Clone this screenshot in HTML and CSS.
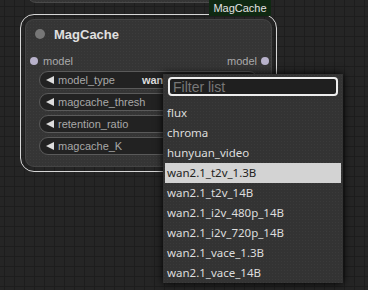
FILE: index.html
```html
<!DOCTYPE html>
<html lang="en">
<head>
    <meta charset="UTF-8">
    <meta name="viewport" content="width=device-width, initial-scale=1.0">
    <title>MagCache</title>
    <link rel="stylesheet" href="styles.css">
</head>
<body>
    <div class="canvas">
        <!-- node above, only its bottom edge is visible -->
        <div class="node upper-node"></div>

        <div class="node selected magcache">
            <div class="node-title">
                <span class="title-dot"></span>
                <span class="title-text">MagCache</span>
            </div>
            <div class="node-body">
                <div class="slot-row">
                    <span class="slot-dot"></span>
                    <span class="slot-name">model</span>
                    <span class="slot-name out">model</span>
                    <span class="slot-dot"></span>
                </div>
                <div class="widget">
                    <span class="arrow"></span>
                    <span class="widget-label">model_type</span>
                    <span class="widget-value">wan2.1_t2v_1.3B</span>
                </div>
                <!-- values of the other widgets sit under the open dropdown -->
                <div class="widget">
                    <span class="arrow"></span>
                    <span class="widget-label">magcache_thresh</span>
                </div>
                <div class="widget">
                    <span class="arrow"></span>
                    <span class="widget-label">retention_ratio</span>
                </div>
                <div class="widget">
                    <span class="arrow"></span>
                    <span class="widget-label">magcache_K</span>
                </div>
            </div>
        </div>

        <div class="badge">MagCache</div>

        <!-- combo dropdown -->
        <div class="context-menu">
            <input class="filter" type="text" placeholder="Filter list">
            <div class="menu-entry">flux</div>
            <div class="menu-entry">chroma</div>
            <div class="menu-entry">hunyuan_video</div>
            <div class="menu-entry current">wan2.1_t2v_1.3B</div>
            <div class="menu-entry">wan2.1_t2v_14B</div>
            <div class="menu-entry">wan2.1_i2v_480p_14B</div>
            <div class="menu-entry">wan2.1_i2v_720p_14B</div>
            <div class="menu-entry">wan2.1_vace_1.3B</div>
            <div class="menu-entry">wan2.1_vace_14B</div>
        </div>
    </div>
</body>
</html>
```

FILE: styles.css
```css
body {
    margin: 0;
    font-family: "Liberation Sans", Arial, sans-serif;
    background-color: #222;
    overflow: hidden;
}
.canvas {
    position: relative;
    width: 368px;
    height: 290px;
    background-color: #252525;
    background-image:
        linear-gradient(to right, #1d1d1d 1px, transparent 1px),
        linear-gradient(to bottom, #1d1d1d 1px, transparent 1px);
    background-size: 10px 10px;
    background-position: 4px 6px;
    overflow: hidden;
}
.node {
    position: absolute;
    box-sizing: border-box;
    background-color: #353535;
    background-image: radial-gradient(circle, #3c3c3c 0.6px, transparent 0.9px);
    background-size: 3px 3px;
    border-radius: 9px;
}
.upper-node {
    left: 27px;
    top: -40px;
    width: 245px;
    height: 43px;
    border: 1px solid #4a4a4a;
}
.magcache {
    left: 25px;
    top: 19px;
    width: 247px;
    height: 148px;
    border: 1px solid #444;
}
.selected {
    outline: 1.5px solid #d6d6d6;
    outline-offset: 4px;
}
.node-title {
    display: flex;
    align-items: center;
    height: 28px;
    padding-left: 9px;
}
.title-dot {
    width: 10px;
    height: 10px;
    border-radius: 50%;
    background-color: #777;
}
.title-text {
    margin-left: 9px;
    font-size: 13px;
    font-weight: bold;
    color: #e0e0e0;
}
.node-body {
    padding: 4px 13px 0;
}
.slot-row {
    display: flex;
    align-items: center;
    height: 18px;
    margin: 0 -13px 1px;
    padding: 0 2px 0 4px;
    font-size: 11px;
    color: #aaa;
}
.slot-dot {
    width: 8px;
    height: 8px;
    border-radius: 50%;
    background-color: #b8b2cb;
}
.slot-name {
    margin-left: 5px;
}
.slot-name.out {
    margin-left: auto;
    margin-right: 4px;
}
.widget {
    display: flex;
    align-items: center;
    box-sizing: border-box;
    height: 18px;
    margin-bottom: 4px;
    padding: 0 8px 0 6px;
    background-color: #222;
    border: 1px solid #5a5a5a;
    border-radius: 9px;
    font-size: 11px;
    color: #a8a8a8;
    overflow: hidden;
    white-space: nowrap;
}
.arrow {
    width: 0;
    height: 0;
    border-top: 4px solid transparent;
    border-bottom: 4px solid transparent;
    border-right: 8px solid #ddd;
}
.widget-label {
    margin-left: 4px;
}
.widget-value {
    margin-left: 27px;
    color: #ddd;
    font-weight: bold;
}
.badge {
    position: absolute;
    left: 209px;
    top: 0;
    width: 62px;
    height: 16px;
    line-height: 16px;
    text-align: center;
    background-color: #0f2912;
    color: #e2e2e2;
    font-size: 11px;
}
.context-menu {
    position: absolute;
    left: 163px;
    top: 74px;
    width: 180px;
    height: 209px;
    box-sizing: border-box;
    padding: 3px 2px 0;
    background-color: #333;
    background-image: radial-gradient(circle, #3a3a3a 0.6px, transparent 0.9px);
    background-size: 3px 3px;
    box-shadow: 0 0 8px #000;
    font-family: "Noto Sans", sans-serif;
}
.filter {
    display: block;
    box-sizing: border-box;
    width: 170px;
    height: 19px;
    margin: 0 0 7px 3px;
    padding: 0 3px;
    background-color: #1f1f1f;
    border: 2px solid #eee;
    border-radius: 4px;
    font-family: "Liberation Sans", Arial, sans-serif;
    font-size: 14px;
    color: #ddd;
    outline: none;
}
.filter::placeholder {
    color: #777;
}
.menu-entry {
    height: 20px;
    line-height: 20px;
    padding-left: 2px;
    font-size: 11.5px;
    color: #ddd;
    white-space: nowrap;
}
.menu-entry.current {
    background-color: #d3d3d3;
    color: #222;
}
```
